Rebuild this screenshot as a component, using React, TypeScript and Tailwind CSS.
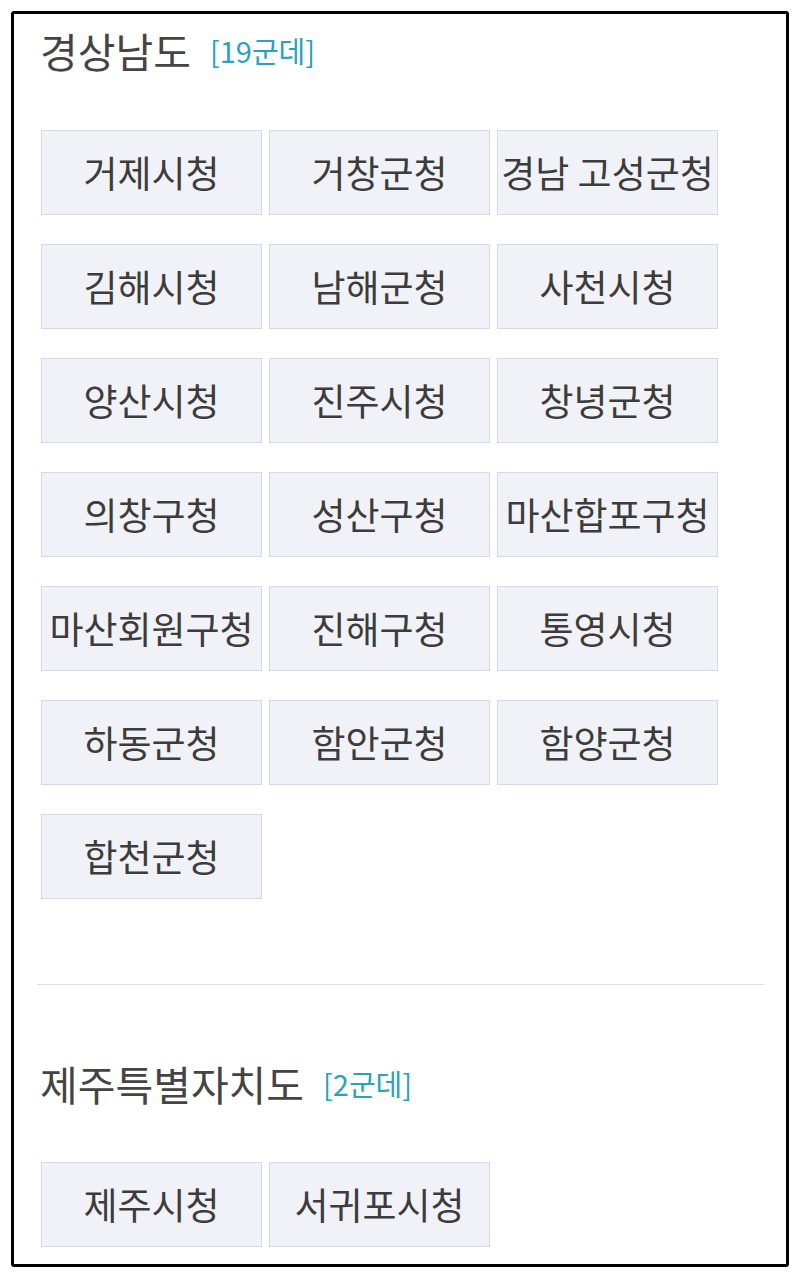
import React from "react";

const gyeongnam = [
  "거제시청", "거창군청", "경남 고성군청",
  "김해시청", "남해군청", "사천시청",
  "양산시청", "진주시청", "창녕군청",
  "의창구청", "성산구청", "마산합포구청",
  "마산회원구청", "진해구청", "통영시청",
  "하동군청", "함안군청", "함양군청",
  "합천군청",
];
const jeju = ["제주시청", "서귀포시청"];

function Btn({ label }: { label: string }) {
  return (
    <div className="h-[85px] w-[221px] flex items-center justify-center bg-[#f1f2f8] border border-[#d5d8e8] text-[37px] leading-none text-[#3c3c3c] whitespace-nowrap">
      {label}
    </div>
  );
}

function Title({ name, count }: { name: string; count: string }) {
  return (
    <div className="flex items-center h-[40px] pl-[3px]">
      <span className="text-[41px] leading-none text-[#444444]">{name}</span>
      <span className="ml-[19px] text-[29px] leading-none text-[#2ba2b7]">{count}</span>
    </div>
  );
}

export default function App() {
  return (
    <div className="bg-white p-[11px]" style={{ fontFamily: '"Noto Sans CJK KR", "Noto Sans", sans-serif' }}>
      <div className="border-[3px] border-black rounded-[3px] bg-white pl-[23px] pr-[22px] pt-[16px] pb-[17px]">
        <Title name="경상남도" count="[19군데]" />
        <div className="mt-[60px] pl-[4px] grid grid-cols-[221px_221px_221px] gap-x-[7px] gap-y-[29px]">
          {gyeongnam.map((g) => (
            <Btn key={g} label={g} />
          ))}
        </div>
        <div className="mt-[85px] h-px bg-[#dcdde4]" />
        <div className="mt-[78px]">
          <Title name="제주특별자치도" count="[2군데]" />
        </div>
        <div className="mt-[59px] pl-[4px] grid grid-cols-[221px_221px_221px] gap-x-[7px]">
          {jeju.map((g) => (
            <Btn key={g} label={g} />
          ))}
        </div>
      </div>
    </div>
  );
}
